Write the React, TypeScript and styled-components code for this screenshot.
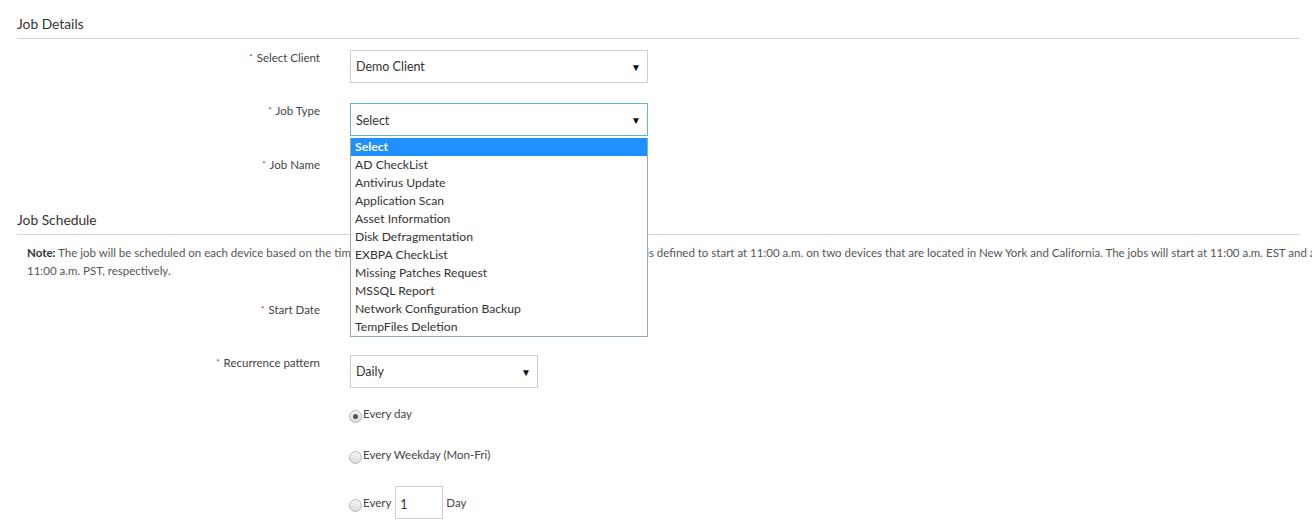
import React from "react";
import styled, { createGlobalStyle } from "styled-components";

const Global = createGlobalStyle`
  html, body { margin: 0; padding: 0; background: #fff; overflow: hidden; }
  body { font-family: "Lato", "Liberation Sans", sans-serif; color: #333; }
  * { box-sizing: border-box; }
`;

const Page = styled.div`
  width: 1312px;
  padding: 0 12px 0 17px;
`;

const SectionTitle = styled.div<{ $top: number }>`
  margin-top: ${(p) => p.$top}px;
  padding-bottom: 4px;
  border-bottom: 1px solid #d3d3d3;
  font-size: 13.8px;
  line-height: 20px;
  color: #333;
`;

const FormRow = styled.div<{ $top: number }>`
  display: grid;
  grid-template-columns: 303px 298px;
  column-gap: 30px;
  margin-top: ${(p) => p.$top}px;
  align-items: start;
`;

const Label = styled.div`
  text-align: right;
  font-size: 11.5px;
  line-height: 16px;
  color: #444;
`;

const Star = styled.span`
  color: #933;
  font-size: 8px;
  vertical-align: top;
  margin-right: 4px;
  position: relative;
  top: -1px;
`;

const Control = styled.div`
  position: relative;
`;

const SelectBox = styled.div<{ $focus?: boolean; $w?: number }>`
  width: ${(p) => p.$w ?? 298}px;
  height: 33px;
  border: 1px solid ${(p) => (p.$focus ? "#5fb3d8" : "#cfcfcf")};
  display: flex;
  align-items: center;
  justify-content: space-between;
  padding: ${(p) => (p.$focus ? "1px" : "0")} 6px 0 5px;
  font-size: 12.5px;
  color: #333;
  background: #fff;
`;

const Arrow = styled.span`
  font-size: 10px;
  color: #111;
`;

const TextBox = styled.div<{ $w?: number }>`
  width: ${(p) => p.$w ?? 298}px;
  height: 33px;
  border: 1px solid #cfcfcf;
  background: #fff;
`;

const Dropdown = styled.div`
  position: absolute;
  top: 35px;
  left: 0;
  width: 298px;
  border: 1px solid #9aa7b8;
  border-top: none;
  background: #fff;
  z-index: 10;
`;

const Option = styled.div<{ $active?: boolean }>`
  height: 18px;
  line-height: 18px;
  padding-left: 4px;
  font-size: 12.2px;
  color: ${(p) => (p.$active ? "#fff" : "#333")};
  background: ${(p) => (p.$active ? "#1e90ff" : "transparent")};
  font-weight: ${(p) => (p.$active ? 700 : 400)};
`;

const Note = styled.div`
  margin-top: 9px;
  padding-left: 10px;
  font-size: 11.5px;
  line-height: 18px;
  color: #555;
  white-space: nowrap;
  & b { color: #333; }
`;

const Options = styled.div`
  display: flex;
  flex-direction: column;
  gap: 23px;
  margin-top: 16px;
  margin-left: 333px;
`;

const RadioRow = styled.label<{ $h?: number }>`
  display: flex;
  align-items: center;
  height: ${(p) => p.$h ?? 18}px;
  font-size: 11.5px;
  color: #444;
`;

const Radio = styled.span<{ $checked?: boolean }>`
  width: 13px;
  height: 13px;
  border-radius: 50%;
  border: 1px solid #b8b8b8;
  background: linear-gradient(#f4f4f4, #dcdcdc);
  margin-top: 6px;
  margin-left: -1px;
  margin-right: 1px;
  display: inline-flex;
  align-items: center;
  justify-content: center;
  &::after {
    content: "";
    width: 5px;
    height: 5px;
    border-radius: 50%;
    background: ${(p) => (p.$checked ? "#555" : "transparent")};
  }
`;

const SmallInput = styled.div`
  width: 48px;
  height: 33px;
  border: 1px solid #cfcfcf;
  margin: 0 3px 0 4px;
  display: flex;
  align-items: center;
  padding: 3px 4px 0;
  font-size: 12.5px;
  color: #333;
`;

const jobTypes = [
  "Select",
  "AD CheckList",
  "Antivirus Update",
  "Application Scan",
  "Asset Information",
  "Disk Defragmentation",
  "EXBPA CheckList",
  "Missing Patches Request",
  "MSSQL Report",
  "Network Configuration Backup",
  "TempFiles Deletion",
];

export default function App() {
  return (
    <>
      <Global />
      <Page>
        <SectionTitle $top={14}>Job Details</SectionTitle>

        <FormRow $top={11}>
          <Label>
            <Star>*</Star>Select Client
          </Label>
          <Control>
            <SelectBox>
              Demo Client<Arrow>▼</Arrow>
            </SelectBox>
          </Control>
        </FormRow>

        <FormRow $top={20}>
          <Label>
            <Star>*</Star>Job Type
          </Label>
          <Control>
            <SelectBox $focus>
              Select<Arrow>▼</Arrow>
            </SelectBox>
            <Dropdown>
              {jobTypes.map((t, i) => (
                <Option key={t} $active={i === 0}>
                  {t}
                </Option>
              ))}
            </Dropdown>
          </Control>
        </FormRow>

        <FormRow $top={21}>
          <Label>
            <Star>*</Star>Job Name
          </Label>
          <Control>
            <TextBox />
          </Control>
        </FormRow>

        <SectionTitle $top={20}>Job Schedule</SectionTitle>

        <Note>
          <b>Note:</b> The job will be scheduled on each device based on the time zone of the device. For
          example, let us assume that a job is defined to start at 11:00 a.m. on two devices that are located in
          New York and California. The jobs will start at 11:00 a.m. EST and at
          <br />
          11:00 a.m. PST, respectively.
        </Note>

        <FormRow $top={22}>
          <Label>
            <Star>*</Star>Start Date
          </Label>
          <Control>
            <TextBox />
          </Control>
        </FormRow>

        <FormRow $top={20}>
          <Label>
            <Star>*</Star>Recurrence pattern
          </Label>
          <Control>
            <SelectBox $w={188}>
              Daily<Arrow>▼</Arrow>
            </SelectBox>
          </Control>
        </FormRow>

        <Options>
          <RadioRow>
            <Radio $checked />
            Every day
          </RadioRow>
          <RadioRow>
            <Radio />
            Every Weekday (Mon-Fri)
          </RadioRow>
          <RadioRow $h={33}>
            <Radio />
            Every
            <SmallInput>1</SmallInput>
            Day
          </RadioRow>
        </Options>
      </Page>
    </>
  );
}
